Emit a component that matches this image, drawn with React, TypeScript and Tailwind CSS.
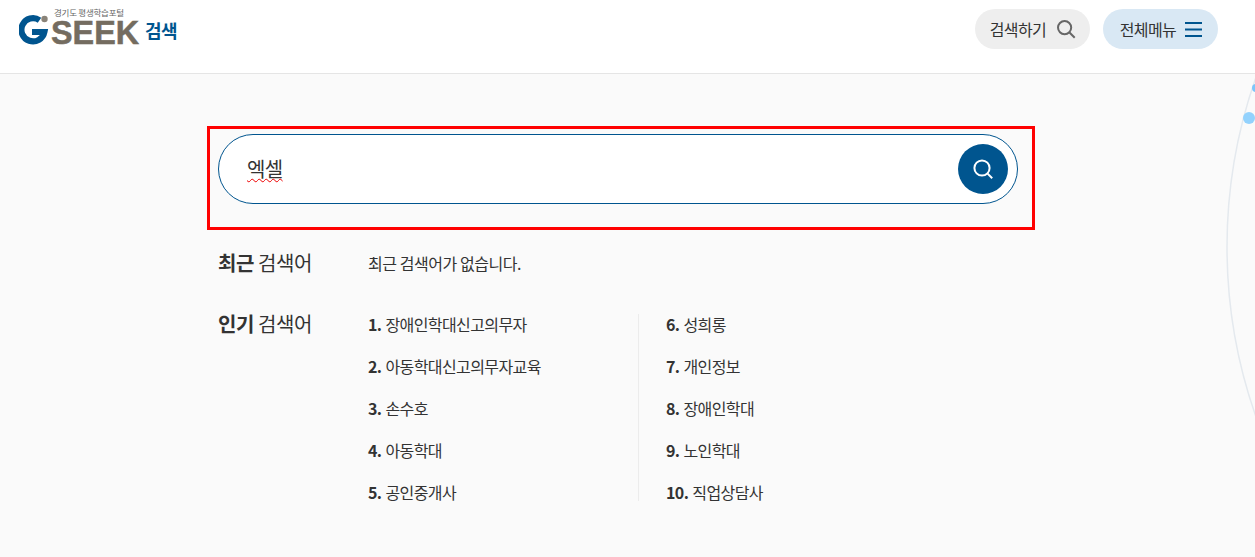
const FONT = "font-['Noto_Sans_CJK_KR','Noto_Sans',sans-serif]";

const left = [
  ["1.", "장애인학대신고의무자"],
  ["2.", "아동학대신고의무자교육"],
  ["3.", "손수호"],
  ["4.", "아동학대"],
  ["5.", "공인중개사"],
];
const right = [
  ["6.", "성희롱"],
  ["7.", "개인정보"],
  ["8.", "장애인학대"],
  ["9.", "노인학대"],
  ["10.", "직업상담사"],
];

function Column({ items, className }: { items: string[][]; className: string }) {
  return (
    <ul className={`flex flex-col gap-[14px] ${className}`}>
      {items.map(([n, t]) => (
        <li key={n} className="h-[28px] leading-[28px] text-[16px] tracking-[-0.6px] text-[#333] whitespace-nowrap">
          <b className="font-bold mr-[4px]">{n}</b>
          {t}
        </li>
      ))}
    </ul>
  );
}

function Logo() {
  return (
    <a className="relative block w-[180px] h-[46px] mt-[5px]">
      <span className="absolute left-[54px] top-[1px] text-[8.5px] leading-[12px] tracking-[-0.25px] text-[#666] whitespace-nowrap">
        경기도 평생학습포털
      </span>
      <svg className="absolute left-[19px] top-[9px]" width="32" height="32" viewBox="0 0 32 32">
        <path d="M20.5 6.2A11.6 11.6 0 1 0 25.4 18H13" fill="none" stroke="#00558f" strokeWidth="6.2" />
        <circle cx="25.5" cy="5" r="3.2" fill="#8a8378" />
      </svg>
      <span className="absolute left-[51px] top-[15px] font-['Liberation_Sans'] font-bold text-[33px] leading-[26px] text-[#746c60] [-webkit-text-stroke:0.5px_#746c60] scale-x-[0.98] origin-left">
        SEEK
      </span>
      <span className="absolute left-[145px] top-[11px] text-[18px] leading-[28px] font-bold tracking-[-0.6px] text-[#00558f] whitespace-nowrap">
        검색
      </span>
    </a>
  );
}

export default function App() {
  return (
    <div className={`relative h-[557px] overflow-hidden bg-[#fafafa] ${FONT}`}>
      <header className="h-[74px] bg-white border-b border-[#e5e5e5] flex justify-between pr-[37px]">
        <Logo />
        <div className="flex gap-[13px] pt-[9px]">
          <button className="w-[115px] h-[40px] rounded-full bg-[#eeeeee] flex items-center justify-center gap-[10px] pl-[1px] text-[16px] tracking-[-0.6px] text-[#333]">
            검색하기
            <svg width="20" height="20" viewBox="0 0 20 20" fill="none" stroke="#666" strokeWidth="2">
              <circle cx="8.6" cy="8.6" r="6.6" />
              <path d="M13.5 13.5l5.2 5.2" />
            </svg>
          </button>
          <button className="w-[115px] h-[40px] rounded-full bg-[#d9e8f4] flex items-center justify-center gap-[9px] pl-[1px] text-[16px] tracking-[-0.6px] text-[#333]">
            전체메뉴
            <svg width="17" height="15" viewBox="0 0 17 15" stroke="#00558f" strokeWidth="2">
              <path d="M0 1h17M0 7.5h17M0 14h17" />
            </svg>
          </button>
        </div>
      </header>

      <svg className="absolute left-[1190px] top-[74px]" width="65" height="483" viewBox="1190 74 65 483" fill="none">
        <circle cx="1739" cy="247" r="512" stroke="#e4e9ee" strokeWidth="1.5" />
        <circle cx="1249" cy="118" r="6" fill="#93d2fd" />
        <circle cx="1256" cy="88" r="4" fill="#7cc6fb" />
      </svg>

      <main className="relative ml-[207px] w-[828px] pt-[52px]">
        <div className="border-[3px] border-[#ff0000] pl-[8px] pr-[13px] pt-[5px] pb-[23px]">
          <div className="w-[800px] h-[70px] rounded-full border border-[#00558f] bg-white flex items-center justify-between pl-[28px] pr-[9px]">
            <span className="text-[20px] tracking-[-0.6px] text-[#333] underline decoration-wavy decoration-[#e00] decoration-1 underline-offset-1">
              엑셀
            </span>
            <button className="w-[50px] h-[50px] rounded-full bg-[#00558f] flex items-center justify-center">
              <svg width="22" height="22" viewBox="0 0 22 22" fill="none" stroke="#fff" strokeWidth="2">
                <circle cx="10" cy="10" r="7.6" />
                <path d="M15.6 15.6l4.6 4.6" />
              </svg>
            </button>
          </div>
        </div>

        <section className="pl-[11px] pt-[17px] flex">
          <h2 className="w-[150px] text-[20px] leading-[32px] tracking-[-0.4px] text-[#333]">
            <b className="font-bold">최근</b> 검색어
          </h2>
          <p className="text-[16px] leading-[32px] tracking-[-0.45px] text-[#333]">최근 검색어가 없습니다.</p>
        </section>

        <section className="pl-[11px] pt-[29px] flex">
          <h2 className="w-[150px] text-[20px] leading-[32px] tracking-[-0.4px] text-[#333]">
            <b className="font-bold">인기</b> 검색어
          </h2>
          <div className="flex items-start">
            <div className="w-[271px] border-r border-[#ececec] h-[187px] mt-[6px]">
              <Column items={left} className="-mt-[4px]" />
            </div>
            <div className="mt-[6px]">
              <Column items={right} className="pl-[27px] -mt-[4px]" />
            </div>
          </div>
        </section>
      </main>
    </div>
  );
}
